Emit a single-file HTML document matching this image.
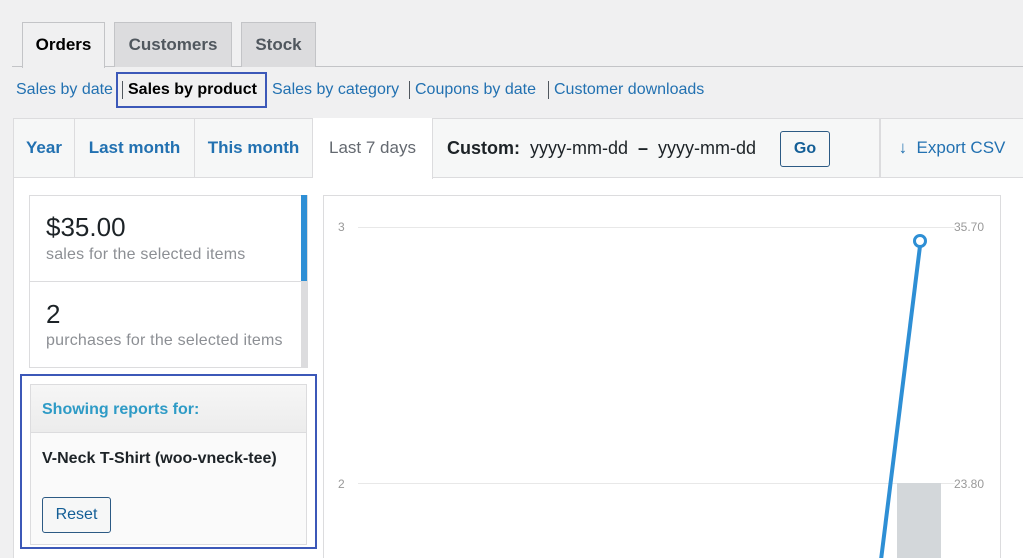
<!DOCTYPE html>
<html style="overflow:hidden"><head><style>
*{box-sizing:border-box;margin:0;padding:0}
html,body{width:1023px;height:558px;overflow:hidden}
body{background:#f0f0f1;font-family:"Liberation Sans",Arial,sans-serif;position:relative}
.a{position:absolute}
.tab{position:absolute;top:22px;height:45px;border:1px solid #c3c4c7;border-bottom:none;font-weight:bold;font-size:17px;line-height:44px;text-align:center;color:#50575e;background:#dcdcde}
.sub{position:absolute;top:81px;font-size:16px;color:#2271b1}
.nav{position:absolute;top:118px;height:60px;font-size:17px;font-weight:bold;color:#2271b1;line-height:60px;text-align:center;border-right:1px solid #dcdcde}
</style></head><body>
<div class="a" style="left:12px;top:66px;width:1011px;height:1px;background:#c3c4c7"></div>
<div class="tab" style="left:22px;width:83px;background:#f0f0f1;color:#000;height:46px">Orders</div>
<div class="tab" style="left:114px;width:118px">Customers</div>
<div class="tab" style="left:241px;width:75px">Stock</div>
<div class="sub" style="left:16px">Sales by date</div>
<div class="a" style="left:122px;top:81px;width:1px;height:18px;background:#50575e"></div>
<div class="a" style="left:116px;top:72px;width:151px;height:36px;border:2px solid #3c58b8"></div>
<div class="sub" style="left:128px;color:#000;font-weight:bold">Sales by product</div>
<div class="sub" style="left:272px">Sales by category</div>
<div class="a" style="left:409px;top:81px;width:1px;height:18px;background:#50575e"></div>
<div class="sub" style="left:415px">Coupons by date</div>
<div class="a" style="left:548px;top:81px;width:1px;height:18px;background:#50575e"></div>
<div class="sub" style="left:554px">Customer downloads</div>

<div class="a" style="left:13px;top:118px;width:1020px;height:450px;background:#fff;border:1px solid #dcdcde"></div>
<div class="a" style="left:14px;top:119px;width:1010px;height:59px;background:#f6f7f7;border-bottom:1px solid #dcdcde"></div>
<div class="nav" style="left:14px;width:61px">Year</div>
<div class="nav" style="left:75px;width:120px">Last month</div>
<div class="nav" style="left:195px;width:118px">This month</div>
<div class="nav" style="left:313px;width:120px;background:#fff;color:#646970;font-weight:normal;height:61px">Last 7 days</div>
<div class="nav" style="left:433px;width:447px;color:#1d2327;text-align:left;padding-left:14px;font-weight:normal;font-size:18px"><b>Custom:</b>&nbsp; yyyy-mm-dd &nbsp;<b>–</b>&nbsp; yyyy-mm-dd</div>
<div class="a" style="left:780px;top:131px;width:50px;height:36px;border:1px solid #2c5a84;border-radius:3px;background:#f6f7f7;color:#135e96;font-weight:bold;font-size:16px;line-height:34px;text-align:center">Go</div>
<div class="nav" style="left:880px;width:143px;font-weight:normal;border-left:1px solid #dcdcde;border-right:none">↓&nbsp; Export CSV</div>

<div class="a" style="left:29px;top:195px;width:279px;height:173px;border:1px solid #dcdcde;background:#fff"></div>
<div class="a" style="left:30px;top:281px;width:271px;height:1px;background:#dcdcde"></div>
<div class="a" style="left:301px;top:195px;width:6px;height:86px;background:#2e8fd5"></div>
<div class="a" style="left:301px;top:281px;width:6px;height:86px;background:#dcdcde"></div>
<div class="a" style="left:46px;top:212px;font-size:26px;color:#1d2327">$35.00</div>
<div class="a" style="left:46px;top:246px;font-size:16px;color:#8c8f94;letter-spacing:0.2px">sales for the selected items</div>
<div class="a" style="left:46px;top:299px;font-size:26px;color:#1d2327">2</div>
<div class="a" style="left:46px;top:332px;font-size:16px;color:#8c8f94;letter-spacing:0.2px">purchases for the selected items</div>

<div class="a" style="left:20px;top:374px;width:297px;height:175px;border:2px solid #3c58b8"></div>
<div class="a" style="left:30px;top:384px;width:277px;height:161px;border:1px solid #dcdcde;background:#fafafa"></div>
<div class="a" style="left:31px;top:385px;width:275px;height:48px;background:linear-gradient(#f6f6f6,#ececec);border-bottom:1px solid #dcdcde"></div>
<div class="a" style="left:42px;top:401px;font-size:16px;font-weight:bold;color:#2e9bc6">Showing reports for:</div>
<div class="a" style="left:42px;top:450px;font-size:16px;font-weight:bold;color:#1d2327">V-Neck T-Shirt (woo-vneck-tee)</div>
<div class="a" style="left:42px;top:497px;width:69px;height:36px;border:1px solid #2c5a84;border-radius:3px;background:#f6f7f7;color:#135e96;font-size:16px;line-height:34px;text-align:center">Reset</div>

<div class="a" style="left:323px;top:195px;width:678px;height:380px;border:1px solid #dcdcde;background:#fff"></div>
<div class="a" style="left:358px;top:227px;width:597px;height:1px;background:#e8e8e8"></div>
<div class="a" style="left:358px;top:483px;width:597px;height:1px;background:#e8e8e8"></div>
<div class="a" style="left:338px;top:220px;font-size:12px;color:#999">3</div>
<div class="a" style="left:338px;top:477px;font-size:12px;color:#999">2</div>
<div class="a" style="left:954px;top:220px;font-size:12px;color:#999">35.70</div>
<div class="a" style="left:954px;top:477px;font-size:12px;color:#999">23.80</div>
<div class="a" style="left:897px;top:483px;width:44px;height:75px;background:#d3d7da"></div>
<svg class="a" style="left:0;top:0" width="1023" height="558"><line x1="920" y1="246" x2="881" y2="560" stroke="#2e8fd5" stroke-width="4"/><circle cx="920" cy="241" r="5.5" fill="#fff" stroke="#2e8fd5" stroke-width="3"/></svg>
</body></html>
